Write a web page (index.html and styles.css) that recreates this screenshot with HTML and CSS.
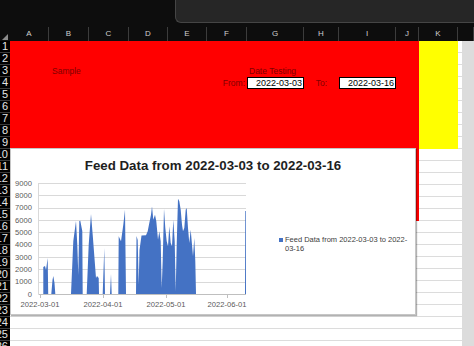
FILE: index.html
```html
<!DOCTYPE html>
<html>
<head>
<meta charset="utf-8">
<title>Feed Data</title>
<link rel="stylesheet" href="styles.css">
</head>
<body>
<div class="top"><div class="panel"></div></div>

<!-- column letters -->
<div class="colhead">
  <div class="corner"><span class="tri"></span></div>
  <div class="ch">A</div>
  <div class="ch">B</div>
  <div class="ch">C</div>
  <div class="ch">D</div>
  <div class="ch">E</div>
  <div class="ch">F</div>
  <div class="ch">G</div>
  <div class="ch">H</div>
  <div class="ch">I</div>
  <div class="ch">J</div>
  <div class="ch">K</div>
  <div class="ch"></div>
</div>

<div class="sheet">
  <div class="rowhead">
    <div class="rn">1</div><div class="rn">2</div><div class="rn">3</div><div class="rn">4</div>
    <div class="rn">5</div><div class="rn">6</div><div class="rn">7</div><div class="rn">8</div>
    <div class="rn">9</div><div class="rn">10</div><div class="rn">11</div><div class="rn">12</div>
    <div class="rn">13</div><div class="rn">14</div><div class="rn">15</div><div class="rn">16</div>
    <div class="rn">17</div><div class="rn">18</div><div class="rn">19</div><div class="rn">20</div>
    <div class="rn">21</div><div class="rn">22</div><div class="rn">23</div><div class="rn">24</div>
    <div class="rn">25</div><div class="rn">26</div>
  </div>

  <!-- one strip per column for the vertical gridlines -->
  <div class="col"></div><div class="col"></div><div class="col"></div><div class="col"></div>
  <div class="col"></div><div class="col"></div><div class="col"></div><div class="col"></div>
  <div class="col"></div><div class="col"></div><div class="col"></div><div class="col"></div>

  <div class="red"></div>
  <div class="yellow"></div>

  <div class="lbl sample">Sample</div>
  <div class="lbl dt">Date Testing</div>
  <div class="lbl from">From:</div>
  <div class="datebox g4">2022-03-03</div>
  <div class="lbl to">To:</div>
  <div class="datebox i4">2022-03-16</div>

  <div class="chart">
    <div class="title">Feed Data from 2022-03-03 to 2022-03-16</div>
    <div class="body">
      <svg class="plot" viewBox="11 174 250 140" width="250" height="140">
        <g stroke="#d9d9d9" stroke-width="1">
          <line x1="39" y1="183.5" x2="246" y2="183.5"/>
          <line x1="39" y1="195.5" x2="246" y2="195.5"/>
          <line x1="39" y1="208.5" x2="246" y2="208.5"/>
          <line x1="39" y1="220.5" x2="246" y2="220.5"/>
          <line x1="39" y1="232.5" x2="246" y2="232.5"/>
          <line x1="39" y1="245.5" x2="246" y2="245.5"/>
          <line x1="39" y1="257.5" x2="246" y2="257.5"/>
          <line x1="39" y1="269.5" x2="246" y2="269.5"/>
          <line x1="39" y1="282.5" x2="246" y2="282.5"/>
          <line x1="38.5" y1="183" x2="38.5" y2="294"/>
        </g>
        <path fill="#4472c4" d="
          M43.3 294 L43.3 267 L45 266 L46 270 L47.7 258 L48.2 294 Z
          M51.3 294 L52.5 280 L53.3 276 L54.5 283 L55.3 294 Z
          M71 294 L73.3 241 L76 221 L77.3 245 L78.3 275 L79.3 221 L80.3 220.7 L81.7 228 L82.3 231 L82.7 294 Z
          M86.7 294 L88.7 244.7 L91 214 L92.7 234.7 L94.7 261 L96 278 L97 276 L98.7 278 L99 294 Z
          M102.7 294 L104.3 248 L105 294 Z
          M110 294 L111 274 L111.7 294 Z
          M118.3 294 L118.7 236.3 L121 241.3 L123.3 224.7 L125 209.7 L126 294 Z
          M136 294 L136.5 236 L137.7 240 L138.7 285 L139.5 250 L141.5 235.5 L146 235.3 L147.7 231.3 L149.3 223
          L151 214.7 L152 206.3 L153.3 219.7 L155 214.7 L156.3 221.3 L158 239.7 L159.3 231.3 L160.7 241.3
          L161.7 288 L162.7 261 L164 208.7 L165.3 228 L166.7 241.3 L168 246.3 L169.3 226.3 L170.7 243
          L172 246.3 L173.3 219.7 L174.7 241.3 L175.7 291.3 L176.7 244.7 L178 198.7 L179.3 201.3 L180.7 209.7
          L182 224.7 L183 231.3 L184.3 228 L185.7 209.7 L186.7 208 L188 228 L189.3 243 L190.7 229.7
          L192 244.7 L193 256.3 L194.3 238 L195.3 261.3 L196 294 Z
          M245 294 L245.3 211 L246 211 L246 294 Z"/>
        <g stroke="#bfbfbf" stroke-width="1">
          <line x1="38.5" y1="294.5" x2="246" y2="294.5"/>
          <line x1="40.5" y1="294" x2="40.5" y2="298"/>
          <line x1="103.5" y1="294" x2="103.5" y2="298"/>
          <line x1="166.5" y1="294" x2="166.5" y2="298"/>
          <line x1="227.5" y1="294" x2="227.5" y2="298"/>
        </g>
        <g class="ylab" text-anchor="end">
          <text x="32" y="185.7">9000</text>
          <text x="32" y="198">8000</text>
          <text x="32" y="210.4">7000</text>
          <text x="32" y="222.7">6000</text>
          <text x="32" y="235">5000</text>
          <text x="32" y="247.4">4000</text>
          <text x="32" y="259.7">3000</text>
          <text x="32" y="272">2000</text>
          <text x="32" y="284.4">1000</text>
          <text x="32" y="296.7">0</text>
        </g>
        <g class="xlab" text-anchor="middle">
          <text x="40" y="307">2022-03-01</text>
          <text x="103" y="307">2022-04-01</text>
          <text x="166" y="307">2022-05-01</text>
          <text x="227" y="307">2022-06-01</text>
        </g>
      </svg>
      <div class="legend">
        <span class="swatch"></span>
        <span>Feed Data from 2022-03-03 to 2022-<br>03-16</span>
      </div>
    </div>
  </div>
</div>
</body>
</html>
```

FILE: styles.css
```css
:root { --cols: 10px 39px 40px 40px 39px 39px 40px 57px 35px 57px 23px 39px 1fr; }

body { margin:0; width:474px; height:346px; overflow:hidden; background:#0d0d0d; font-family:"Liberation Sans", Arial, sans-serif; }

/* dark window chrome */
.top { height:27px; }
.top .panel { margin-left:175px; height:23px; box-sizing:border-box; background:#262626; border-left:1px solid #454545; border-bottom:1px solid #454545; border-bottom-left-radius:6px; }

/* column header row */
.colhead { display:grid; grid-template-columns:var(--cols); height:14px; }
.colhead .ch { border-right:1px solid #3c3c3c; color:#cfcfcf; font-size:8px; line-height:14px; text-align:center; }
.colhead .corner { display:flex; justify-content:flex-end; align-items:flex-end; padding:0 2px 1px 0; }
.colhead .tri { width:0; height:0; border-left:6px solid transparent; border-bottom:6px solid #8c8c8c; }

/* cell area */
.sheet { position:relative; display:grid; grid-template-columns:var(--cols); grid-template-rows:repeat(26, 12px); background:repeating-linear-gradient(#fff 0 11px, #dcdcdc 11px 12px); }
.rowhead { grid-column:1; grid-row:1 / -1; background:#000; }
.rowhead .rn { height:12px; box-sizing:border-box; display:flex; justify-content:flex-end; overflow:hidden; padding-right:2px; border-bottom:1px solid #3a3a3a; color:#e4e4e4; font-size:11px; line-height:11px; }
.col { grid-row:1 / -1; border-right:1px solid #dcdcdc; }

.red { grid-column:2 / 12; grid-row:1 / 16; background:#f00; }
.yellow { grid-column:12; grid-row:1 / 10; background:#ff0; }

.lbl { align-self:end; white-space:nowrap; font-size:8.5px; line-height:11px; color:#800000; }
.sample { grid-column:3; grid-row:3; padding-left:3px; }
.dt { grid-column:8; grid-row:3; padding-left:2px; }
.from { grid-column:7; grid-row:4; justify-self:end; padding-right:2px; }
.to { grid-column:9; grid-row:4; justify-self:center; }
.datebox { grid-row:4; box-sizing:border-box; padding-right:1px; background:#fff; border:1px solid #000; color:#000; font-size:9px; line-height:10px; text-align:right; white-space:nowrap; }
.g4 { grid-column:8; }
.i4 { grid-column:10; }

/* embedded chart */
.chart { position:absolute; left:10px; top:107px; width:406px; height:167px; box-sizing:border-box; background:#fff; border:1px solid #c6c6c6; box-shadow:1px 1px 1px rgba(0,0,0,.3); }
.chart .title { height:25px; box-sizing:border-box; padding-top:10px; text-align:center; font-weight:bold; font-size:13.3px; line-height:14px; color:#1e1e1e; }
.chart .body { display:flex; }
.chart .plot { display:block; flex:none; }
.ylab, .xlab { font-family:"Liberation Sans", Arial, sans-serif; font-size:7.6px; fill:#595959; }
.legend { display:flex; margin:61px 0 0 18px; font-size:7.5px; line-height:9px; color:#404040; white-space:nowrap; }
.legend .swatch { flex:none; width:4px; height:4px; margin:3px 2px 0 0; background:#4472c4; }
```
